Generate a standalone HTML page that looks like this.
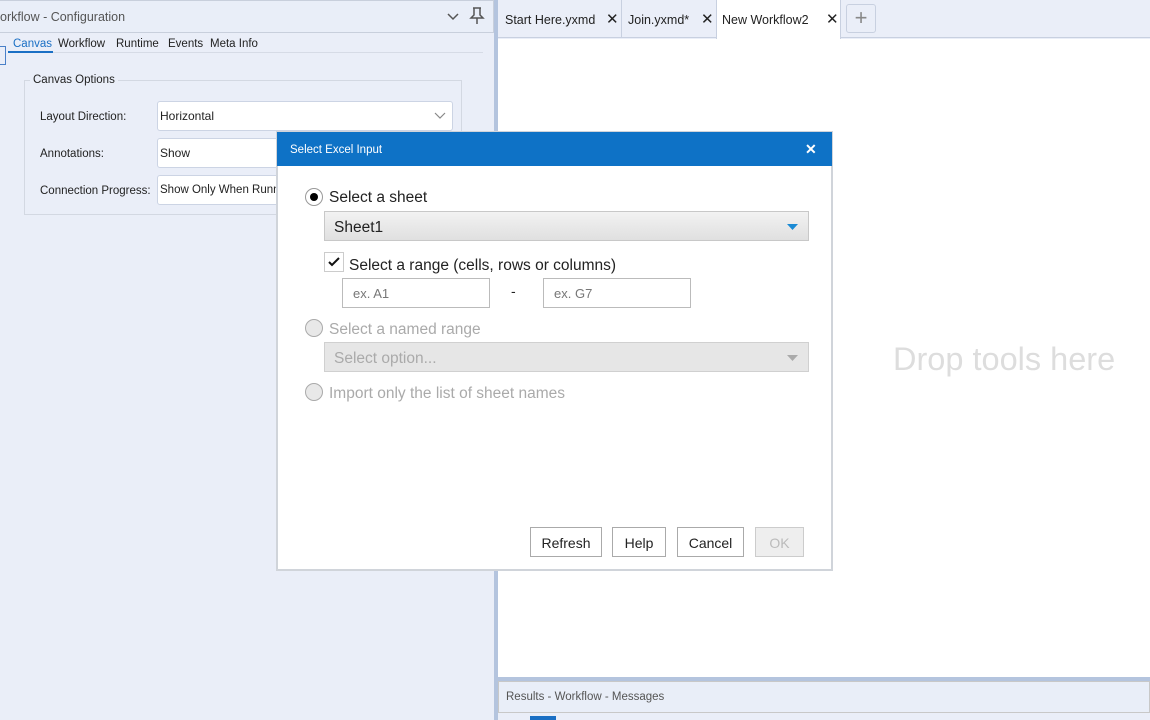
<!DOCTYPE html>
<html><head><style>
*{box-sizing:border-box;margin:0;padding:0}
body{width:1150px;height:720px;position:relative;overflow:hidden;background:#eaeef8;font-family:"Liberation Sans",sans-serif;color:#222}
.a{position:absolute}
.sel{position:absolute;background:#fff;border:1px solid #ccd4e4;border-radius:3px;font-size:12px;padding-left:2px;line-height:26px}
.btn{position:absolute;top:527px;height:30px;border:1px solid #aaa;background:#fff;font-size:14px;text-align:center;line-height:30px}
.radio{position:absolute;width:18px;height:18px;border-radius:50%;border:1px solid #aaa;background:#e8e8e8}
</style></head><body>
<!-- left panel -->
<div class="a" style="left:0;top:0;width:494px;height:33px;border:1px solid #c8cfdc;border-left:none;background:#e9eef8"></div>
<div class="a" style="left:0;top:10px;font-size:12.5px;color:#555">orkflow - Configuration</div>
<svg class="a" style="left:446px;top:12px" width="14" height="10"><path d="M2 2l5 5 5-5" stroke="#555" stroke-width="1.5" fill="none"/></svg>
<svg class="a" style="left:469px;top:7px" width="16" height="18"><path d="M4 1h8M5 1v7l-3 3h12l-3-3V1M8 11v6" stroke="#555" stroke-width="1.5" fill="none"/></svg>
<div class="a" style="left:13px;top:38px;font-size:11.5px;color:#1a6fc4">Canvas</div>
<div class="a" style="left:8px;top:51px;width:45px;height:2px;background:#1a6fc4"></div>
<div class="a" style="left:53px;top:52px;width:430px;height:1px;background:#d6dbe6"></div>
<div class="a" style="left:58px;top:38px;font-size:11.5px">Workflow</div>
<div class="a" style="left:116px;top:38px;font-size:11.5px">Runtime</div>
<div class="a" style="left:168px;top:38px;font-size:11.5px">Events</div>
<div class="a" style="left:210px;top:38px;font-size:11.5px">Meta Info</div>
<div class="a" style="left:0;top:46px;width:6px;height:19px;border:1px solid #4a80c8;border-left:none"></div>
<div class="a" style="left:24px;top:80px;width:438px;height:135px;border:1px solid #d3d8e2"></div>
<div class="a" style="left:30px;top:74px;background:#eaeef8;padding:0 3px;font-size:11.5px">Canvas Options</div>
<div class="a" style="left:40px;top:111px;font-size:11.5px">Layout Direction:</div>
<div class="a" style="left:40px;top:148px;font-size:11.5px">Annotations:</div>
<div class="a" style="left:40px;top:185px;font-size:11.5px">Connection Progress:</div>
<div class="sel" style="left:157px;top:101px;width:296px;height:30px;line-height:28px">Horizontal</div>
<svg class="a" style="left:434px;top:112px" width="12" height="8"><path d="M1 1l5 5 5-5" stroke="#888" stroke-width="1.2" fill="none"/></svg>
<div class="sel" style="left:157px;top:138px;width:130px;height:30px;line-height:28px">Show</div>
<div class="sel" style="left:157px;top:175px;width:130px;height:30px;line-height:28px;overflow:hidden;white-space:nowrap;font-size:11.5px">Show Only When Running</div>
<!-- divider -->
<div class="a" style="left:494px;top:0;width:4px;height:720px;background:#b4c4de"></div>
<!-- tabs -->
<div class="a" style="left:498px;top:0;width:652px;height:38px;background:#eaeef8;border-bottom:1px solid #c8d0e0"></div>
<div class="a" style="left:498px;top:0;width:124px;height:38px;border-right:1px solid #c8d0e0"></div>
<div class="a" style="left:505px;top:13px;font-size:12.5px">Start Here.yxmd</div>
<div class="a" style="left:606px;top:10px;font-size:15px">✕</div>
<div class="a" style="left:628px;top:13px;font-size:12.5px">Join.yxmd*</div>
<div class="a" style="left:701px;top:10px;font-size:15px">✕</div>
<div class="a" style="left:716px;top:0;width:125px;height:39px;background:#fff;border-left:1px solid #c8d0e0;border-right:1px solid #c8d0e0"></div>
<div class="a" style="left:722px;top:13px;font-size:12.5px">New Workflow2</div>
<div class="a" style="left:826px;top:10px;font-size:15px">✕</div>
<div class="a" style="left:846px;top:4px;width:30px;height:29px;border:1px solid #c8d0e0;border-radius:3px;color:#888;font-size:22px;text-align:center;line-height:26px">+</div>
<!-- canvas -->
<div class="a" style="left:498px;top:39px;width:652px;height:638px;background:#fff"></div>
<div class="a" style="left:893px;top:341px;font-size:32.5px;color:#ddd">Drop tools here</div>
<div class="a" style="left:498px;top:677px;width:652px;height:4px;background:#b4c4de"></div>
<div class="a" style="left:498px;top:681px;width:652px;height:32px;background:#e9eef8;border:1px solid #c8c8c8"></div>
<div class="a" style="left:506px;top:691px;font-size:11.5px;color:#555">Results - Workflow - Messages</div>
<div class="a" style="left:530px;top:716px;width:26px;height:4px;background:#1a6fc4"></div>
<!-- dialog -->
<div class="a" style="left:276px;top:131px;width:557px;height:440px;background:#fff;border:2px solid #d0d4da"></div>
<div class="a" style="left:277px;top:132px;width:555px;height:34px;background:#0e72c6"></div>
<div class="a" style="left:290px;top:144px;font-size:11.5px;color:#fff">Select Excel Input</div>
<div class="a" style="left:805px;top:141px;font-size:14px;color:#fff;font-weight:bold">✕</div>
<div class="radio" style="left:305px;top:188px;background:#fff;border-color:#999"></div>
<div class="a" style="left:310px;top:193px;width:8px;height:8px;border-radius:50%;background:#000"></div>
<div class="a" style="left:329px;top:189px;font-size:15.5px">Select a sheet</div>
<div class="a" style="left:324px;top:211px;width:485px;height:30px;border:1px solid #c8c8c8;background:linear-gradient(#f2f2f2,#e0e0e0);font-size:15.5px;padding-left:9px;line-height:31px">Sheet1</div>
<svg class="a" style="left:787px;top:224px" width="12" height="7"><path d="M0 0h11l-5.5 6z" fill="#1a8ad4"/></svg>
<div class="a" style="left:324px;top:252px;width:20px;height:20px;border:1px solid #ccc"></div>
<svg class="a" style="left:327px;top:256px" width="14" height="12"><path d="M2 6l3 3 7-7" stroke="#111" stroke-width="2" fill="none"/></svg>
<div class="a" style="left:349px;top:257px;font-size:15.5px">Select a range (cells, rows or columns)</div>
<div class="a" style="left:342px;top:278px;width:148px;height:30px;border:1px solid #bbb;font-size:13px;color:#777;padding-left:10px;line-height:29px">ex. A1</div>
<div class="a" style="left:511px;top:283px;font-size:14px">-</div>
<div class="a" style="left:543px;top:278px;width:148px;height:30px;border:1px solid #bbb;font-size:13px;color:#777;padding-left:10px;line-height:29px">ex. G7</div>
<div class="radio" style="left:305px;top:319px"></div>
<div class="a" style="left:329px;top:321px;font-size:15.5px;color:#aaa">Select a named range</div>
<div class="a" style="left:324px;top:342px;width:485px;height:30px;border:1px solid #d0d0d0;background:#e6e6e6;font-size:15.5px;color:#aaa;padding-left:9px;line-height:31px">Select option...</div>
<svg class="a" style="left:787px;top:355px" width="12" height="7"><path d="M0 0h11l-5.5 6z" fill="#aaa"/></svg>
<div class="radio" style="left:305px;top:383px"></div>
<div class="a" style="left:329px;top:385px;font-size:15.5px;color:#aaa">Import only the list of sheet names</div>
<div class="btn" style="left:530px;width:72px">Refresh</div>
<div class="btn" style="left:612px;width:54px">Help</div>
<div class="btn" style="left:677px;width:67px">Cancel</div>
<div class="btn" style="left:755px;width:49px;background:#eee;border-color:#ccc;color:#bbb">OK</div>
</body></html>
